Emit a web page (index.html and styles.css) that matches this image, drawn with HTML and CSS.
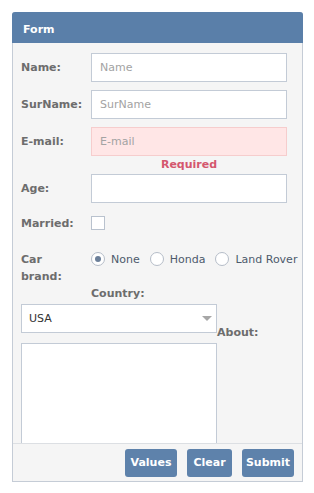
FILE: index.html
```html
<!DOCTYPE html>
<html lang="en">
<head>
  <meta charset="UTF-8" />
  <title>Form</title>
  <link rel="stylesheet" href="styles.css">
</head>
<body>

  <div class="panel">
    <div class="panel-header">Form</div>

    <div class="panel-body">
      <div class="row">
        <label class="label">Name:</label>
        <input class="field" type="text" placeholder="Name">
      </div>
      <div class="row">
        <label class="label">SurName:</label>
        <input class="field" type="text" placeholder="SurName">
      </div>
      <div class="row">
        <label class="label">E-mail:</label>
        <input class="field invalid" type="text" placeholder="E-mail">
      </div>
      <div class="error">Required</div>
      <div class="row">
        <label class="label">Age:</label>
        <input class="field" type="text">
      </div>
      <div class="row married">
        <label class="label">Married:</label>
        <span class="checkbox"></span>
      </div>
      <div class="row car">
        <label class="label">Car<br>brand:</label>
        <div class="radios">
          <span class="radio checked"></span><span class="radio-text">None</span>
          <span class="radio"></span><span class="radio-text">Honda</span>
          <span class="radio"></span><span class="radio-text">Land Rover</span>
        </div>
      </div>

      <div class="country-label">Country:</div>
      <div class="select-row">
        <div class="select">
          <span>USA</span>
          <span class="arrow"></span>
        </div>
        <span class="about-label">About:</span>
      </div>
      <div class="textarea"></div>
    </div>

    <div class="panel-footer">
      <button class="btn wide">Values</button>
      <button class="btn">Clear</button>
      <button class="btn wide">Submit</button>
    </div>
  </div>

</body>
</html>
```

FILE: styles.css
```css
body, html {
  margin: 0;
  background: white;
  font-family: "DejaVu Sans", Verdana, sans-serif;
  font-size: 11px;
}

/* Panel */
.panel {
  margin: 12px 0 0 12px;
  width: 289px;
  border: 1px solid #c5ccd6;
  border-top: none;
  border-radius: 3px 3px 0 0;
  background: #f5f5f5;
}

.panel-header {
  height: 31px;
  line-height: 36px;
  padding-left: 11px;
  margin: 0 -1px;
  background: #5a7fa9;
  color: white;
  font-weight: bold;
  border-radius: 3px 3px 0 0;
}

.panel-body {
  height: 400px;
  overflow: hidden;
  padding: 10px 0 0 8px;
  box-sizing: border-box;
}

.row {
  display: flex;
  align-items: center;
  margin-bottom: 8px;
}

.label {
  width: 70px;
  flex: none;
  color: #6d6d6d;
  font-weight: bold;
}

.field {
  width: 196px;
  height: 29px;
  box-sizing: border-box;
  border: 1px solid #c3cbd6;
  background: white;
  padding: 0 8px;
  font-family: inherit;
  font-size: 11px;
  outline: none;
}

.field::placeholder {
  color: #a3a3a3;
}

.field.invalid {
  background: #ffe6e6;
  border-color: #f6cdcd;
}

.error {
  margin: -6px 0 0 70px;
  width: 196px;
  height: 16px;
  text-align: center;
  color: #d4576e;
  font-weight: bold;
}

.married {
  margin-top: 13px;
  margin-bottom: 0;
  height: 14px;
}

.checkbox {
  width: 12px;
  height: 12px;
  border: 1px solid #b9c2ce;
  background: white;
}

.car {
  align-items: flex-start;
  margin-top: 22px;
  margin-bottom: 0;
}

.car .label {
  line-height: 17px;
  margin-top: -1px;
}

.radios {
  display: flex;
  align-items: center;
}

.radio {
  width: 12px;
  height: 12px;
  border: 1px solid #b5bdc8;
  border-radius: 50%;
  background: white;
  position: relative;
}

.radio.checked::after {
  content: "";
  position: absolute;
  top: 3px;
  left: 3px;
  width: 6px;
  height: 6px;
  border-radius: 50%;
  background: #6b7f99;
}

.radio-text {
  color: #4d5a6c;
  margin: 0 10px 0 6px;
  white-space: nowrap;
}

.country-label {
  margin: 2px 0 0 70px;
  color: #6d6d6d;
  font-weight: bold;
  height: 17px;
}

.select-row {
  display: flex;
  align-items: flex-end;
}

.select {
  width: 196px;
  height: 29px;
  box-sizing: border-box;
  border: 1px solid #c3cbd6;
  background: white;
  display: flex;
  align-items: center;
  justify-content: space-between;
  padding: 0 4px 0 7px;
  color: #333;
}

.arrow {
  width: 0;
  height: 0;
  border-left: 5px solid transparent;
  border-right: 5px solid transparent;
  border-top: 5px solid #a7a7a7;
}

.about-label {
  color: #6d6d6d;
  font-weight: bold;
  margin-bottom: -6px;
}

.textarea {
  margin-top: 10px;
  width: 196px;
  height: 140px;
  box-sizing: border-box;
  border: 1px solid #c3cbd6;
  background: white;
}

/* Footer */
.panel-footer {
  border-top: 1px solid #dcdfe3;
  height: 37px;
  display: flex;
  justify-content: flex-end;
  align-items: center;
  gap: 10px;
  padding-right: 8px;
}

.btn {
  width: 45px;
  height: 28px;
  padding: 0;
  border: none;
  border-radius: 3px;
  background: #5e82ab;
  color: white;
  font-family: inherit;
  font-weight: bold;
  font-size: 11px;
}

.btn.wide {
  width: 52px;
}
```
